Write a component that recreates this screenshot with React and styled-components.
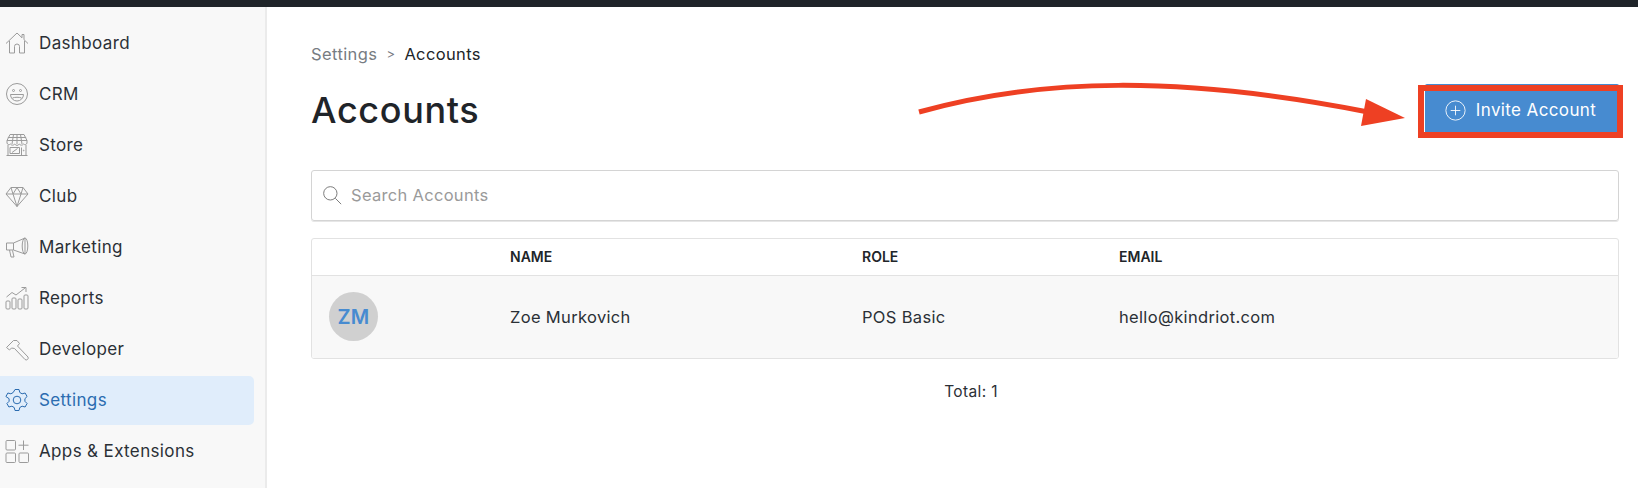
import React from "react";
import styled, { createGlobalStyle } from "styled-components";

const Global = createGlobalStyle`
  html, body { margin: 0; padding: 0; background: #fff; overflow: hidden; }
  body { font-family: Inter, "Noto Sans", sans-serif; color: #212529; }
  * { box-sizing: border-box; }
`;

const Page = styled.div`
  position: relative;
  width: 1638px;
  height: 488px;
  display: flex;
  flex-direction: column;
  overflow: hidden;
`;
const TopBar = styled.header`
  height: 7px;
  flex: none;
  background: #1f2429;
`;
const Body = styled.div`
  flex: 1;
  display: flex;
  min-height: 0;
`;
const Sidebar = styled.nav`
  width: 267px;
  flex: none;
  background: #f8f8f8;
  border-right: 2px solid #ebebeb;
  padding: 12px 11px 0 0;
  display: flex;
  flex-direction: column;
  gap: 2px;
`;
const NavItem = styled.a`
  height: 49px;
  display: flex;
  align-items: center;
  gap: 10px;
  padding: 0 0 2px 5px;
  font-size: 17px;
  letter-spacing: 0.36px;
  border-radius: 0 5px 5px 0;
  color: ${(p) => (p.$active ? "#2b6cb0" : "#2b3036")};
  background: ${(p) => (p.$active ? "#e0edfb" : "transparent")};
  svg {
    width: 24px;
    height: 24px;
    flex: none;
    fill: none;
    stroke: ${(p) => (p.$active ? "#2b6cb0" : "#9b9b9b")};
    stroke-width: 1;
  }
`;
const Main = styled.main`
  flex: 1;
  padding: 36px 19px 0 44px;
  min-width: 0;
`;
const Crumbs = styled.div`
  display: flex;
  align-items: center;
  font-size: 16.5px;
  letter-spacing: 0.4px;
  line-height: 22px;
  color: #777c82;
`;
const CrumbSep = styled.span`
  margin: 0 9px 0 9px;
  font-size: 13px;
`;
const CrumbCurrent = styled.span`
  color: #212529;
  letter-spacing: 0.35px;
`;
const TitleRow = styled.div`
  display: flex;
  align-items: flex-start;
  justify-content: space-between;
  margin-top: 19px;
  height: 86px;
`;
const Title = styled.h1`
  margin: 4px 0 0;
  font-size: 36px;
  letter-spacing: 0.65px;
  line-height: 44px;
  font-weight: 500;
  color: #1f2429;
`;
const InviteButton = styled.button`
  position: relative;
  width: 194px;
  height: 49px;
  border: 0;
  padding: 3px 0 0 0;
  background: #478bd0;
  color: #fff;
  font-family: inherit;
  font-size: 17px;
  letter-spacing: 0.38px;
  display: flex;
  align-items: center;
  justify-content: center;
  gap: 10px;
  border-radius: 2px 2px 0 0;
  svg {
    width: 21px;
    height: 21px;
    margin-left: -3px;
    fill: none;
    stroke: #fff;
    stroke-width: 1;
  }
  &::after {
    content: "";
    position: absolute;
    left: -7px;
    right: -4px;
    top: 1px;
    bottom: -5px;
    border: 6px solid #ee4023;
  }
`;
const Search = styled.div`
  height: 51px;
  border: 1px solid #d4d4d4;
  border-radius: 3px;
  display: flex;
  align-items: center;
  gap: 9px;
  padding: 0 0 2px 10px;
  font-size: 16.5px;
  letter-spacing: 0.3px;
  color: #9a9a9a;
  box-shadow: 0 1px 0 #e6e6e6;
  svg {
    width: 20px;
    height: 20px;
    fill: none;
    stroke: #7d7d7d;
    stroke-width: 1.2;
  }
`;
const Table = styled.div`
  margin-top: 17px;
  border: 1px solid #e2e2e2;
  border-radius: 3px;
  overflow: hidden;
`;
const Row = styled.div`
  display: grid;
  grid-template-columns: 198px 352px 257px 1fr;
  align-items: center;
`;
const HeadRow = styled(Row)`
  height: 37px;
  padding-bottom: 2px;
  border-bottom: 1px solid #e2e2e2;
  font-size: 14px;
  font-weight: 600;
  color: #212529;
`;
const DataRow = styled(Row)`
  height: 82px;
  padding-bottom: 1px;
  background: #f8f8f8;
  font-size: 16.5px;
  letter-spacing: 0.33px;
  color: #2b3036;
`;
const AvatarCell = styled.div`
  padding-left: 17px;
`;
const Avatar = styled.div`
  width: 49px;
  height: 49px;
  border-radius: 50%;
  background: #d0d0d0;
  color: #478bd0;
  font-size: 20px;
  font-weight: 600;
  letter-spacing: 0.3px;
  display: flex;
  align-items: center;
  justify-content: center;
`;
const Total = styled.div`
  margin-top: 22px;
  padding-left: 12px;
  text-align: center;
  font-size: 15.5px;
  letter-spacing: 0.36px;
  line-height: 22px;
  color: #2b3036;
`;
const ArrowOverlay = styled.svg`
  position: absolute;
  left: 0;
  top: 0;
  width: 1638px;
  height: 488px;
  pointer-events: none;
`;

const icons = {
  home: (
    <svg viewBox="0 0 24 24">
      <path d="M1 12.5 12 2l5 4.8V3.500h2v5.200l4 3.800M4.500 10v12h5v-6.500a2.500 2.500 0 0 1 5 0V22h5V10" />
    </svg>
  ),
  smile: (
    <svg viewBox="0 0 24 24">
      <circle cx="12" cy="12" r="10.500" />
      <circle cx="8.500" cy="8.500" r="1" />
      <circle cx="15.500" cy="8.500" r="1" />
      <path d="M5.500 12.500h13a6.500 6.500 0 0 1-13 0Z" />
      <path d="M7.500 16c2.500-1 6.500-1 9 0" />
    </svg>
  ),
  store: (
    <svg viewBox="0 0 24 24">
      <path d="M5 1.500h14l3 6v2.500a2 2 0 0 1-3.400 1 2.600 2.600 0 0 1-4.300 0 2.600 2.600 0 0 1-4.600 0 2.600 2.600 0 0 1-4.300 0A2 2 0 0 1 2 10V7.500ZM2 7.500h20M2.800 4.500h18.400M8.500 1.500 7 11M12 1.500V11M15.500 1.500 17 11" />
      <path d="M3 12v10.500h18V12M1.500 22.500h21M5 14.500h9.500v6H5ZM16.500 14.500v8M7 19.500l5.500-4" />
      <circle cx="18.700" cy="17.500" r=".4" />
    </svg>
  ),
  gem: (
    <svg viewBox="0 0 24 24">
      <path d="M6 3.500h12l5 6.500-11 12.500L1 10ZM1 10h22M8 10l4 12.500L16 10M6 3.500 8 10l4-6.500 4 6.500 2-6.500" />
    </svg>
  ),
  megaphone: (
    <svg viewBox="0 0 24 24">
      <path d="M1.500 8h7L20 3v16L8.500 15h-7ZM8.500 8v7M4.500 15l1.500 7h3l-1.500-6.500" />
      <ellipse cx="20" cy="11" rx="2.800" ry="8" />
    </svg>
  ),
  chart: (
    <svg viewBox="0 0 24 24">
      <rect x="1" y="15" width="4" height="8" rx="1" />
      <rect x="7" y="12" width="4" height="11" rx="1" />
      <rect x="13" y="13" width="4" height="10" rx="1" />
      <rect x="19" y="9" width="4" height="14" rx="1" />
      <path d="M1.500 11 7 6.500l4 2.500 9-7M16.500 1.500H21V6" />
    </svg>
  ),
  hammer: (
    <svg viewBox="0 0 24 24">
      <path d="M1.500 10.500 8.500 3.500H12l2.500 3-2 2.500 10.500 11a2 2 0 0 1-3 2.500L9.500 11.500 6.500 11l-2 2Z" />
    </svg>
  ),
  gear: (
    <svg viewBox="0 0 24 24">
      <circle cx="12" cy="12" r="3.800" />
      <path d="M10 1.500h4l.8 3 2.300 1.300 3-.8 2 3.500-2.200 2.200v2.600l2.200 2.200-2 3.500-3-.8-2.300 1.300-.8 3h-4l-.8-3-2.300-1.300-3 .8-2-3.500 2.200-2.200v-2.600L.9 8.500l2-3.500 3 .8 2.300-1.300Z" />
    </svg>
  ),
  apps: (
    <svg viewBox="0 0 24 24">
      <rect x="1" y="1.500" width="9.500" height="9.500" rx="1" />
      <rect x="1" y="14" width="9.500" height="9.500" rx="1" />
      <rect x="14" y="14" width="9.500" height="9.500" rx="1" />
      <path d="M18.500 1.500v9.500M13.500 6.200h10" />
    </svg>
  ),
};

const nav = [
  ["home", "Dashboard"],
  ["smile", "CRM"],
  ["store", "Store"],
  ["gem", "Club"],
  ["megaphone", "Marketing"],
  ["chart", "Reports"],
  ["hammer", "Developer"],
  ["gear", "Settings", true],
  ["apps", "Apps & Extensions"],
];

export default function App() {
  return (
    <Page>
      <Global />
      <TopBar />
      <Body>
        <Sidebar>
          {nav.map(([icon, label, active]) => (
            <NavItem key={label} $active={active}>
              {icons[icon]}
              {label}
            </NavItem>
          ))}
        </Sidebar>
        <Main>
          <Crumbs>
            Settings
            <CrumbSep>&gt;</CrumbSep>
            <CrumbCurrent>Accounts</CrumbCurrent>
          </Crumbs>
          <TitleRow>
            <Title>Accounts</Title>
            <InviteButton>
              <svg viewBox="0 0 24 24">
                <circle cx="12" cy="12" r="11" />
                <path d="M12 6.500v11M6.500 12h11" />
              </svg>
              Invite Account
            </InviteButton>
          </TitleRow>
          <Search>
            <svg viewBox="0 0 24 24">
              <circle cx="10" cy="10" r="8" />
              <path d="m16 16 7 7" />
            </svg>
            Search Accounts
          </Search>
          <Table>
            <HeadRow>
              <span />
              <span>NAME</span>
              <span>ROLE</span>
              <span>EMAIL</span>
            </HeadRow>
            <DataRow>
              <AvatarCell>
                <Avatar>ZM</Avatar>
              </AvatarCell>
              <span>Zoe Murkovich</span>
              <span>POS Basic</span>
              <span>hello@kindriot.com</span>
            </DataRow>
          </Table>
          <Total>Total: 1</Total>
        </Main>
      </Body>
      <ArrowOverlay viewBox="0 0 1638 488">
        <path d="M919 112C1040 78 1180 75 1368 112" fill="none" stroke="#ee4023" strokeWidth="5" />
        <path d="M1405 118 1366 99 1361 126Z" fill="#ee4023" />
      </ArrowOverlay>
    </Page>
  );
}
